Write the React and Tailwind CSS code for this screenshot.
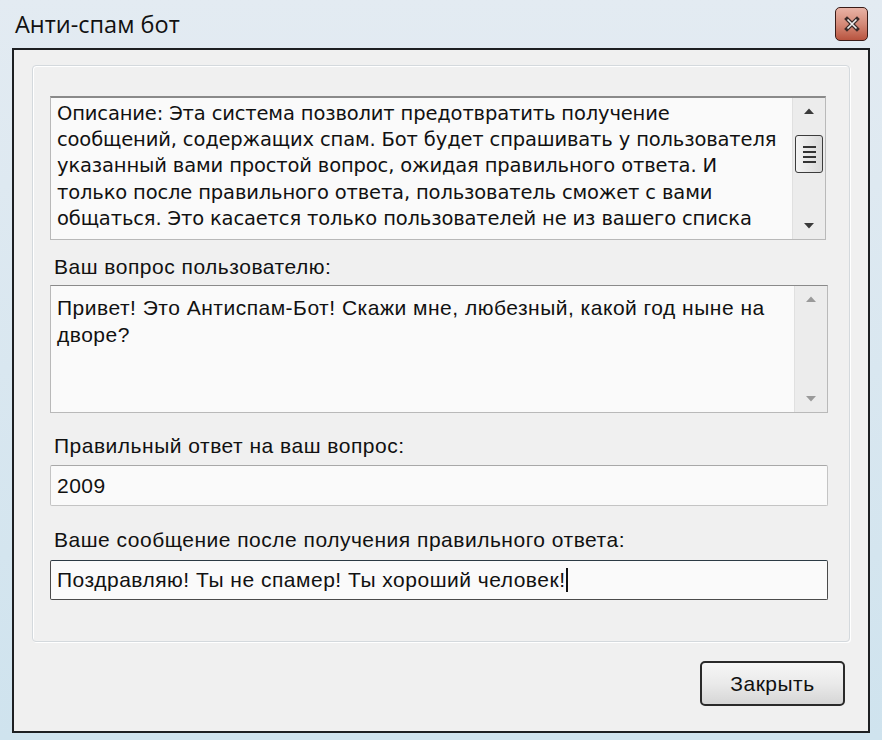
import React from 'react';

const ScrollArrow = ({ dir, dark }) => (
  <svg width="12" height="8" viewBox="0 0 12 8">
    {dir === 'up' ? (
      <path d="M1 7 L6 1.5 L11 7 Z" fill={dark ? '#3a3a3a' : '#9a9a9a'} />
    ) : (
      <path d="M1 1 L6 6.5 L11 1 Z" fill={dark ? '#3a3a3a' : '#9a9a9a'} />
    )}
  </svg>
);

const Scrollbar = ({ thumb }) => (
  <div className="w-[33px] shrink-0 flex flex-col items-center justify-between bg-[#ececec] border-l border-[#e0e0e0] py-[9px]">
    <ScrollArrow dir="up" dark={thumb} />
    {thumb && (
      <div className="w-[28px] h-[38px] mt-[20px] rounded-[3px] border border-[#3c3c3c] bg-gradient-to-r from-[#f4f4f4] to-[#d9d9d9] flex flex-col items-center justify-center gap-[3px]">
        <div className="w-[13px] h-[2px] bg-[#333]" />
        <div className="w-[13px] h-[2px] bg-[#333]" />
        <div className="w-[13px] h-[2px] bg-[#333]" />
        <div className="w-[13px] h-[2px] bg-[#333]" />
      </div>
    )}
    {thumb && <div className="flex-1" />}
    <ScrollArrow dir="down" dark={thumb} />
  </div>
);

const label = "text-[21px] leading-[24px] text-[#111] font-['Liberation_Sans',Arial,sans-serif] tracking-[0.5px]";

const descLines = [
  'Описание: Эта система позволит предотвратить получение',
  'сообщений, содержащих спам. Бот будет спрашивать у пользователя',
  'указанный вами простой вопрос, ожидая правильного ответа. И',
  'только после правильного ответа, пользователь сможет с вами',
  'общаться. Это касается только пользователей не из вашего списка',
];

export default function App() {
  return (
    <div className="w-[882px] h-[740px] bg-gradient-to-b from-[#e3ebf2] to-[#cfe3ee] flex flex-col overflow-hidden">
      <div className="h-[48px] flex items-center justify-between pl-[15px] pr-[14px] pt-[2px] shrink-0">
        <span className="text-[23.5px] text-[#111] font-['Open_Sans','Noto_Sans',sans-serif]">Анти-спам бот</span>
        <div className="w-[33px] h-[34px] -mt-[3px] rounded-[5px] border border-[#3a1c18] bg-gradient-to-b from-[#e9b3a6] via-[#d48a78] to-[#b8533f] flex items-center justify-center">
          <svg width="16" height="16" viewBox="0 0 16 16">
            <path d="M3 3 L13 13 M13 3 L3 13" stroke="#3a2a28" strokeWidth="4" strokeLinecap="square" />
            <path d="M3.5 3.5 L12.5 12.5 M12.5 3.5 L3.5 12.5" stroke="#eee" strokeWidth="1.6" />
          </svg>
        </div>
      </div>
      <div className="mx-[12px] mb-[7px] flex-1 border-2 border-[#1d1f22] bg-[#f0f0f0] flex flex-col px-[18px] pt-[15px] pb-[23px]">
        <div className="h-[577px] rounded-[4px] border border-[#d4d9dd] shadow-[inset_1px_1px_0_#fff,1px_1px_0_#fff] flex flex-col pl-[17px] pr-[23px] pt-[30px]">
          <div className="h-[144px] flex bg-[#fafafa] border border-[#b9b9b9] border-t-[#8a8a8a] border-t-2">
            <div className="flex-1 pl-[6px] pt-[3px] overflow-hidden whitespace-nowrap text-[19.5px] leading-[26.2px] text-[#111] font-['DejaVu_Sans',Tahoma,sans-serif] tracking-[-0.15px]">
              {descLines.map((l) => (
                <div key={l}>{l}</div>
              ))}
            </div>
            <Scrollbar thumb />
          </div>
          <div className={`${label} mt-[15px] pl-[4px]`}>Ваш вопрос пользователю:</div>
          <div className="h-[128px] mt-[6px] flex bg-[#fafafa] border border-[#b9b9b9] border-t-[#8a8a8a] mr-[-2px]">
            <div className={`${label} flex-1 pl-[6px] pt-[8px] leading-[27px]`}>
              Привет! Это Антиспам-Бот! Скажи мне, любезный, какой год ныне на
              <br />
              дворе?
            </div>
            <Scrollbar />
          </div>
          <div className={`${label} mt-[21px] pl-[4px]`}>Правильный ответ на ваш вопрос:</div>
          <div className={`${label} h-[41px] mt-[7px] mr-[-2px] rounded-[2px] bg-[#fafafa] border border-[#c4c4c4] border-t-[#a8a8a8] flex items-center pl-[6px]`}>
            2009
          </div>
          <div className={`${label} mt-[22px] pl-[4px]`}>Ваше сообщение после получения правильного ответа:</div>
          <div className={`${label} h-[40px] mt-[8px] mr-[-2px] rounded-[2px] bg-[#fafafa] border border-[#4a4a4a] border-t-[#2c3a44] flex items-center pl-[6px]`}>
            Поздравляю! Ты не спамер! Ты хороший человек!<span className="inline-block w-[2px] h-[24px] bg-[#111] ml-[1px]" />
          </div>
        </div>
        <div className="flex justify-end mt-[19px] pr-[5px]">
          <button className={`${label} w-[145px] h-[45px] rounded-[5px] border-2 border-[#2a2a2a] bg-gradient-to-b from-[#f6f6f6] via-[#eaeaea] to-[#d6d6d6] flex items-center justify-center`}>
            Закрыть
          </button>
        </div>
      </div>
    </div>
  );
}
